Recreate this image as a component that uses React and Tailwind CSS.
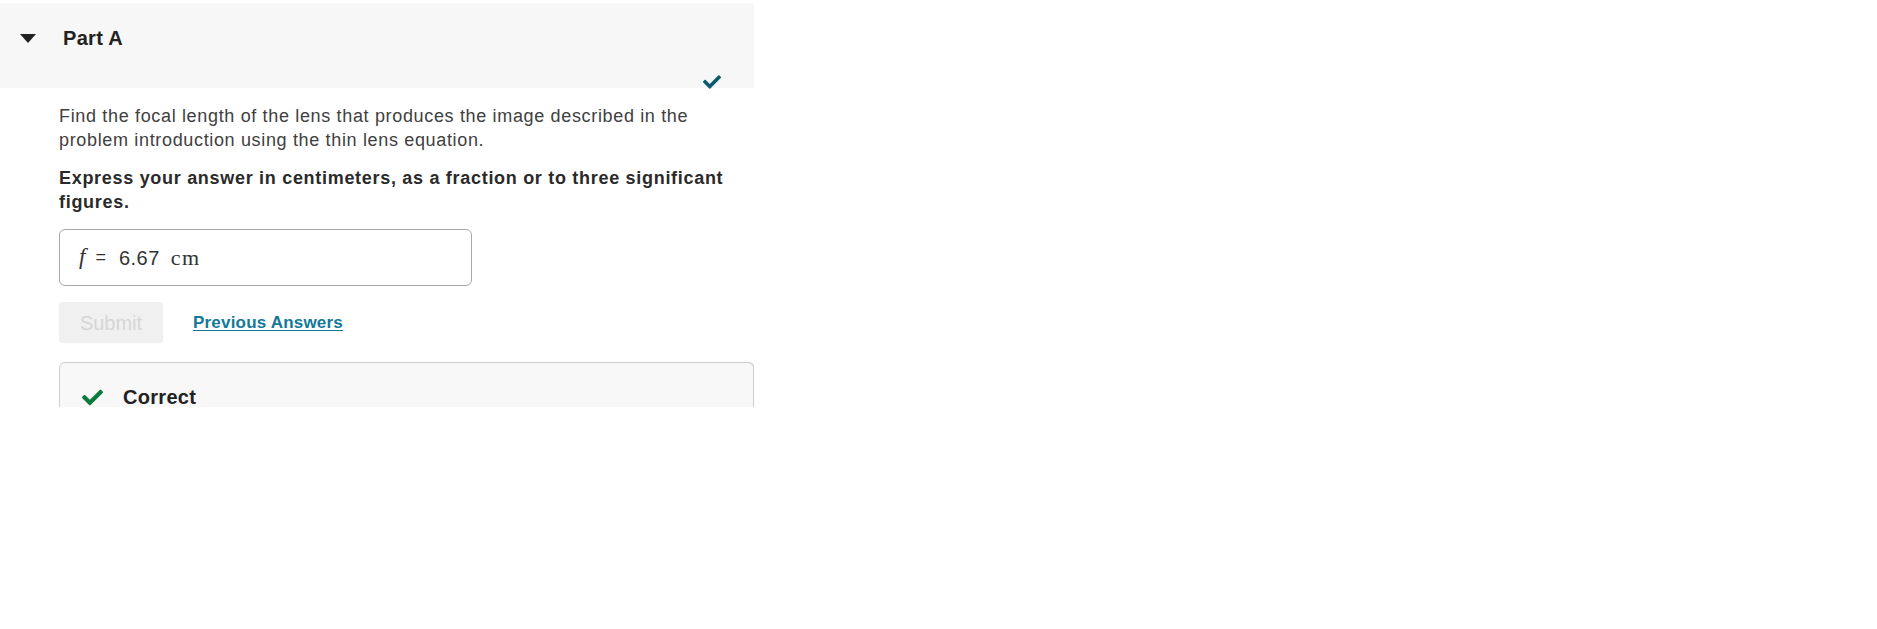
import { FaCheck } from 'react-icons/fa';

export default function App() {
    return (
        <div className="w-full min-h-[629px] bg-white font-['Liberation_Sans',Arial,sans-serif]">
            <div className="w-[754px] h-[407px] overflow-hidden pt-[3px]">
                {/* Header */}
                <div className="relative h-[85px] bg-[#f7f7f7] flex items-start pt-[23px]">
                    <div className="ml-[20px] mt-[8px] w-0 h-0 border-l-[8px] border-r-[8px] border-t-[9px] border-l-transparent border-r-transparent border-t-[#222]" />
                    <h2 className="ml-[27px] text-[20px] leading-[24px] font-bold tracking-[0.3px] text-[#222]">Part A</h2>
                    <FaCheck className="absolute left-[703px] top-[70px] w-[18px] h-[18px] text-[#0b5b70]" />
                </div>

                <div className="pl-[59px] pt-[16px]">
                    <p className="text-[18px] leading-[24px] tracking-[0.66px] text-[#404040] w-[694px]">
                        Find the focal length of the lens that produces the image described in the problem introduction using the thin lens equation.
                    </p>
                    <p className="mt-[14px] text-[18px] leading-[24px] font-bold tracking-[0.7px] text-[#2a2a2a] w-[694px]">
                        Express your answer in centimeters, as a fraction or to three significant figures.
                    </p>

                    {/* Answer input */}
                    <div className="mt-[15px] w-[413px] h-[57px] border border-[#a8a8a8] rounded-[6px] flex items-center pl-[19px] text-[#333]">
                        <span className="font-['Liberation_Serif',serif] italic text-[23px]">f</span>
                        <span className="ml-[10px] text-[18px]">=</span>
                        <span className="ml-[13px] text-[20px] tracking-[0.5px]">6.67</span>
                        <span className="ml-[11px] font-['Liberation_Serif',serif] text-[22px] tracking-[1.5px]">cm</span>
                    </div>

                    {/* Actions */}
                    <div className="mt-[16px] flex items-center">
                        <button className="w-[104px] h-[41px] bg-[#f0f0f0] rounded-[3px] text-[20px] text-[#d6d6d6]" disabled>Submit</button>
                        <a href="#" className="ml-[30px] text-[17px] font-bold tracking-[0.2px] text-[#13799a] underline underline-offset-2">Previous Answers</a>
                    </div>

                    {/* Feedback */}
                    <div className="mt-[19px] w-[695px] h-[80px] border border-[#cfcfcf] rounded-[6px] bg-[#f8f8f8] shadow-[1px_0_1px_rgba(0,0,0,0.12)] flex items-start pt-[22px] pl-[22px]">
                        <FaCheck className="mt-[2px] w-[21px] h-[21px] text-[#0a7a3c]" />
                        <span className="ml-[20px] text-[20px] leading-[24px] font-bold tracking-[0.3px] text-[#222]">Correct</span>
                    </div>
                </div>
            </div>
        </div>
    );
}
